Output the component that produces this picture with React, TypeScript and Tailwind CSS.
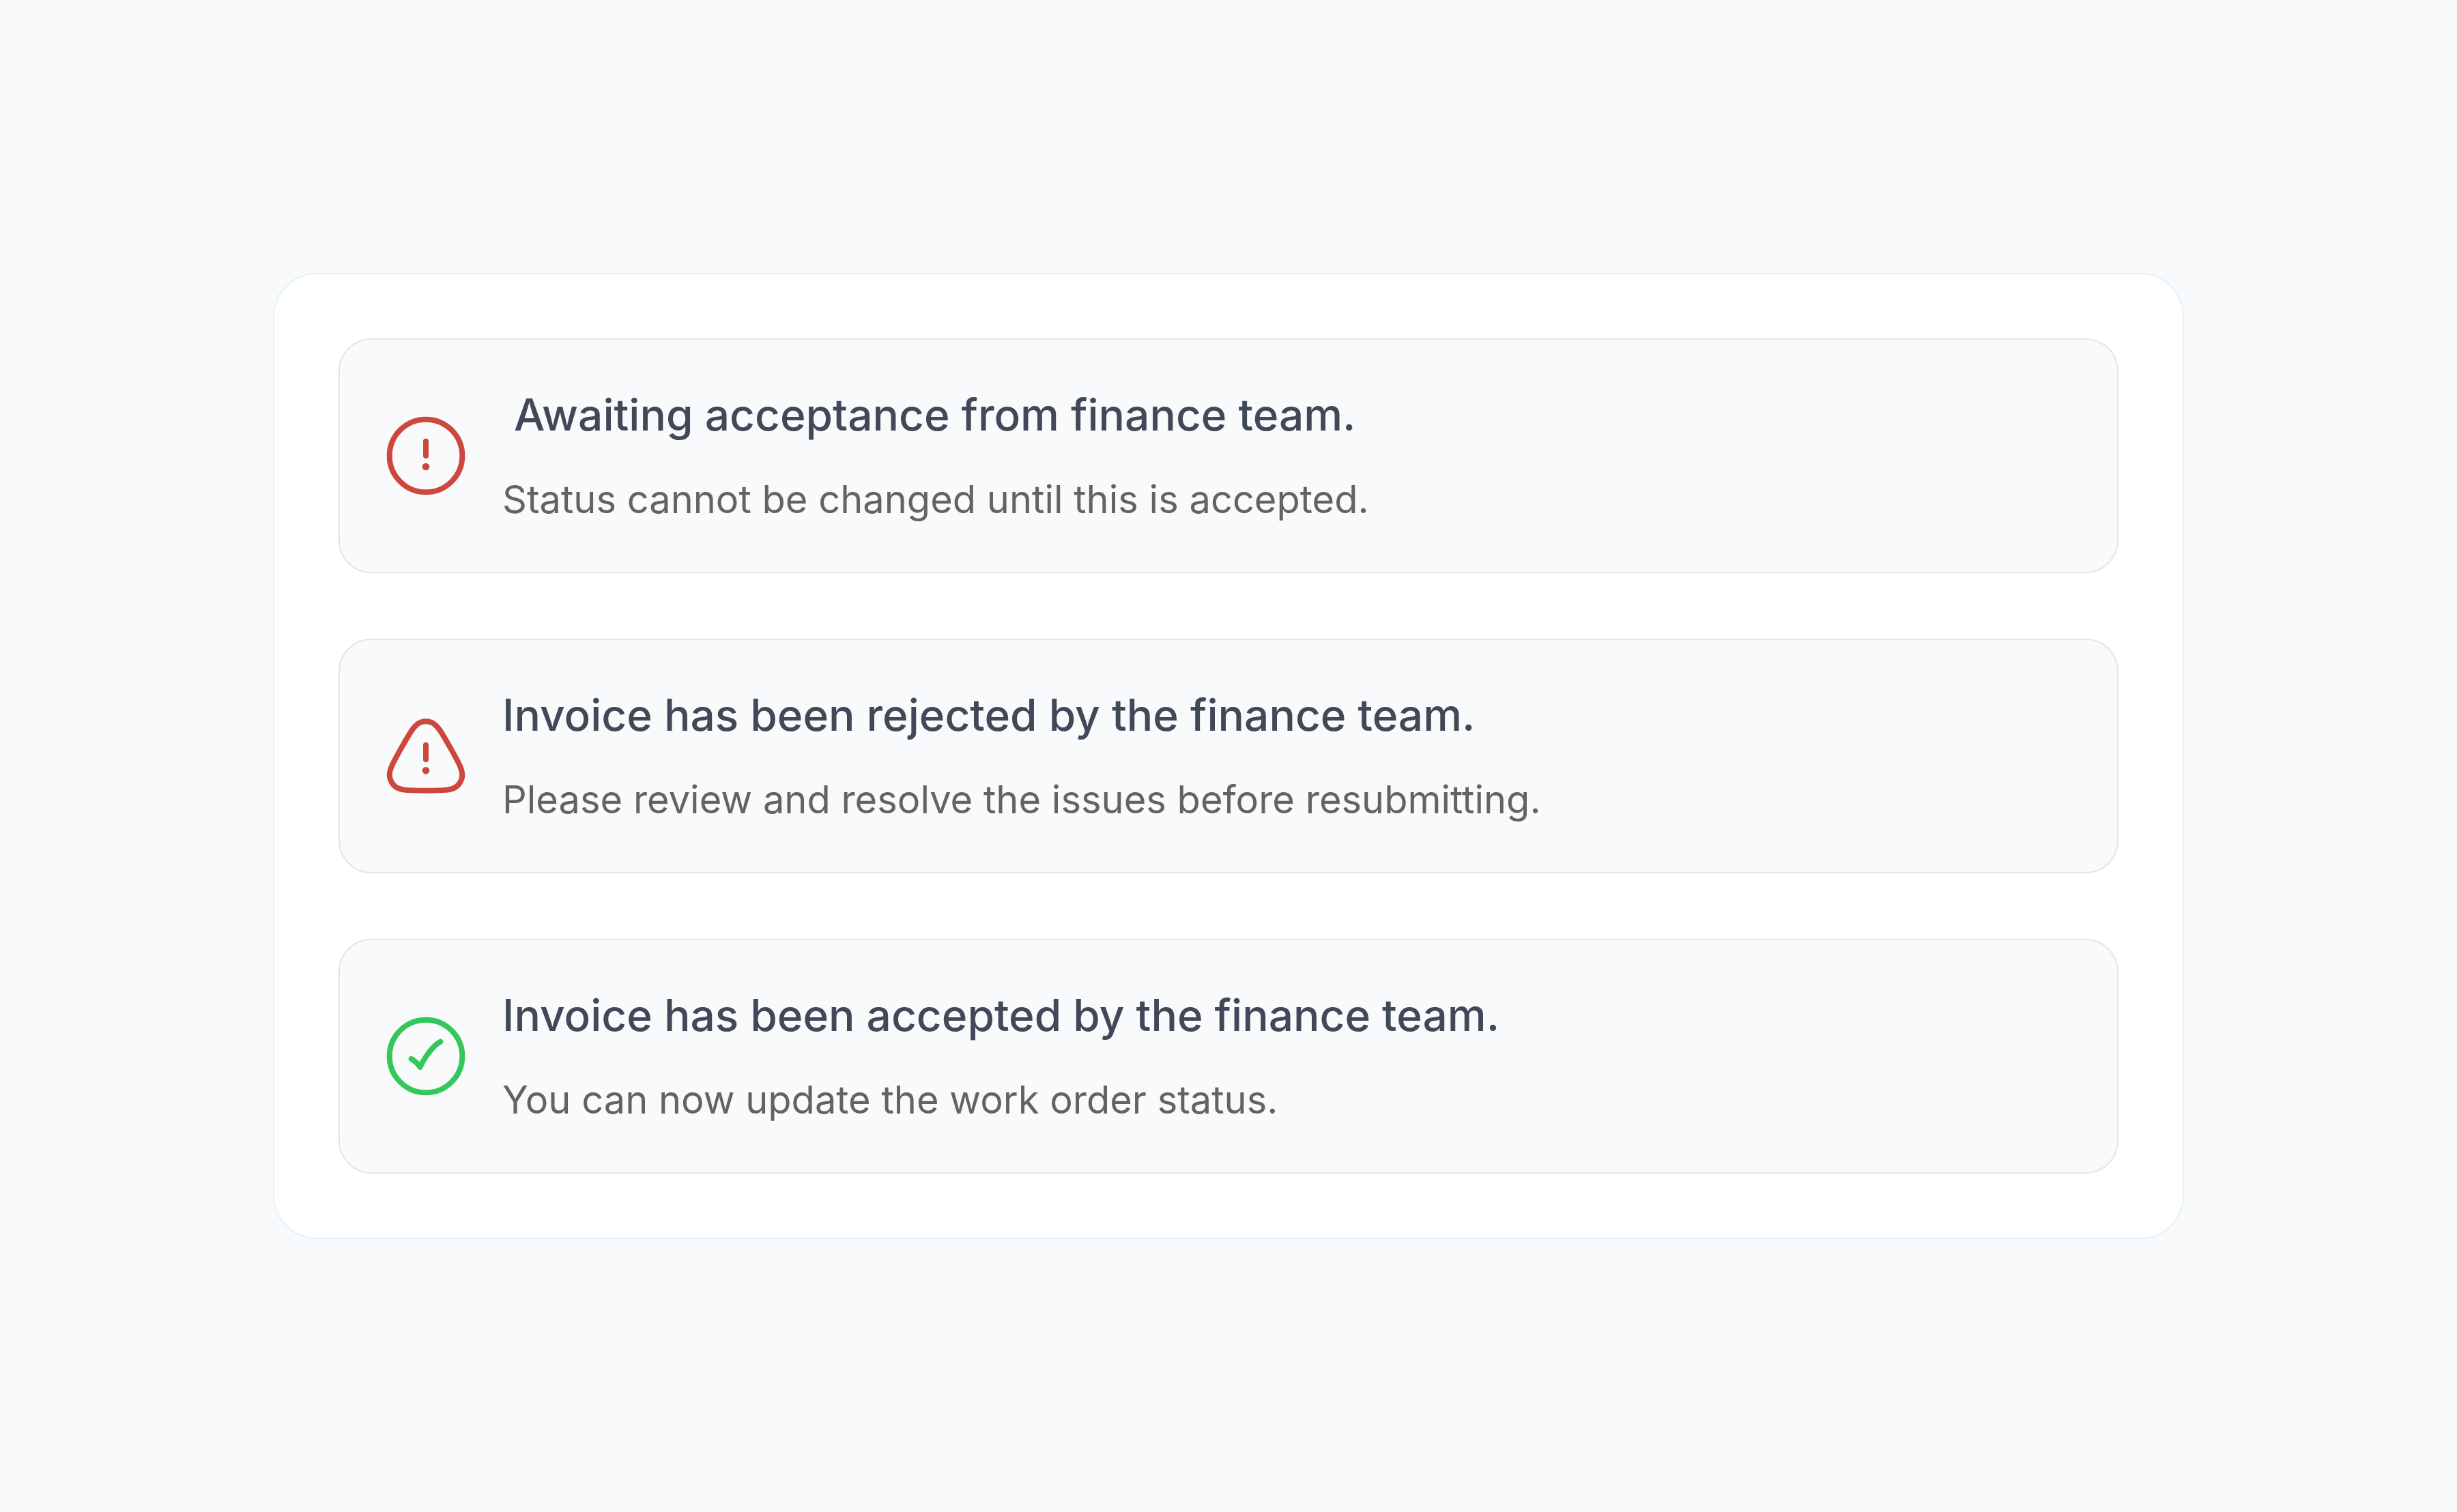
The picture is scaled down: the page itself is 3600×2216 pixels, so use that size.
import type { ReactNode } from "react";

function IconFrame({ className, children }: { className: string; children: ReactNode }) {
  return (
    <svg
      viewBox="0 0 24 24"
      fill="none"
      stroke="currentColor"
      strokeWidth="1.5"
      strokeLinecap="round"
      strokeLinejoin="round"
      aria-hidden="true"
      className={`size-32 shrink-0 ${className}`}
    >
      {children}
    </svg>
  );
}

function AlertCircle() {
  return (
    <IconFrame className="text-[#ce473e]">
      <circle cx="12" cy="12" r="10" />
      <path d="M11.992 15H12.001" strokeWidth="2" />
      <path d="M12 12L12 8" />
    </IconFrame>
  );
}

function AlertTriangle() {
  return (
    <IconFrame className="text-[#ce473e]">
      <path d="M5.32171 9.6829C7.73539 5.41196 8.94222 3.27648 10.5983 2.72678C11.5093 2.42437 12.4907 2.42437 13.4017 2.72678C15.0578 3.27648 16.2646 5.41196 18.6783 9.6829C21.092 13.9538 22.2988 16.0893 21.9368 17.8293C21.7376 18.7866 21.2469 19.6549 20.535 20.3097C19.241 21.5 16.8274 21.5 12 21.5C7.17265 21.5 4.75897 21.5 3.46496 20.3097C2.75308 19.6549 2.26239 18.7866 2.06322 17.8293C1.70119 16.0893 2.90803 13.9538 5.32171 9.6829Z" />
      <path d="M11.992 16H12.001" strokeWidth="2" />
      <path d="M12 13L12 9" />
    </IconFrame>
  );
}

function CheckCircle() {
  return (
    <IconFrame className="text-[#34c759]">
      <circle cx="12" cy="12" r="10" />
      <path d="M8 12.75C8 12.75 9.6 13.6625 10.4 15C10.4 15 12.8 9.75 16 8" />
    </IconFrame>
  );
}

const notices = [
  {
    id: "awaiting",
    icon: <AlertCircle />,
    title: " Awaiting acceptance from finance team.",
    detail: "Status cannot be changed until this is accepted.",
  },
  {
    id: "rejected",
    icon: <AlertTriangle />,
    title: "Invoice has been rejected by the finance team.",
    detail: "Please review and resolve the issues before resubmitting.",
  },
  {
    id: "accepted",
    icon: <CheckCircle />,
    title: "Invoice has been accepted by the finance team.",
    detail: "You can now update the work order status.",
  },
];

export default function App() {
  return (
    <main className="flex min-h-screen items-center bg-[#f9fafc] p-[400px] font-['Inter',sans-serif]">
      <section className="flex w-full flex-col gap-24 rounded-[64px] border-2 border-[#e3f2fb] bg-white p-[94px]">
        {notices.map(({ id, icon, title, detail }) => (
          <article
            key={id}
            className="flex items-center gap-12 rounded-[48px] border-2 border-[#e4e5ea] bg-[#f9fafc] p-[62px]"
          >
            {icon}
            <div className="flex flex-col gap-8">
              <h2 className="text-[64px] leading-[96px] font-medium whitespace-pre-wrap text-[#414858]">{title}</h2>
              <p className="text-[56px] leading-[88px] text-[#636363]">{detail}</p>
            </div>
          </article>
        ))}
      </section>
    </main>
  );
}
